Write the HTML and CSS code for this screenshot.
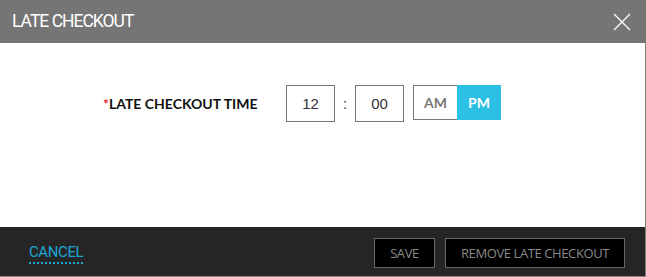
FILE: index.html
```html
<!DOCTYPE html>
<html>
<head>
<meta charset="utf-8">
<link rel="stylesheet" href="styles.css">
</head>
<body>
<div class="modal">
  <div class="header">
    <div class="title">LATE CHECKOUT</div>
    <svg class="close" width="20" height="20" viewBox="0 0 20 20"><path d="M2 2 L18 18 M18 2 L2 18" stroke="#fff" stroke-width="1.3" fill="none"/></svg>
  </div>
  <div class="body">
    <div class="row">
      <div class="label"><span class="req">*</span>LATE CHECKOUT TIME</div>
      <div class="time">
        <div class="box">12</div>
        <div class="colon">:</div>
        <div class="box">00</div>
        <div class="ampm">
          <div class="am">AM</div>
          <div class="pm">PM</div>
        </div>
      </div>
    </div>
  </div>
  <div class="footer">
    <a class="cancel">CANCEL</a>
    <div class="actions">
      <button class="btn save">SAVE</button>
      <button class="btn remove">REMOVE LATE CHECKOUT</button>
    </div>
  </div>
</div>
</body>
</html>
```
FILE: styles.css
```css
html, body {
  margin: 0;
  padding: 0;
  background: #fff;
}
.modal {
  width: 646px;
  height: 277px;
  display: flex;
  flex-direction: column;
}
.header {
  height: 43px;
  background: #757575;
  display: flex;
  align-items: center;
  justify-content: space-between;
  padding: 0 14px 0 12px;
  flex-shrink: 0;
}
.title {
  font-family: Roboto, sans-serif;
  font-size: 17.5px;
  letter-spacing: -1px;
  color: #fff;
  margin-top: -1px;
}
.close {
  display: block;
  margin-top: 1px;
}
.body {
  flex: 1;
  border-right: 1px solid #7d7d7d;
  background: #fff;
}
.row {
  display: flex;
  align-items: center;
  padding: 42px 0 0 103px;
}
.label {
  font-family: Lato, sans-serif;
  font-weight: bold;
  font-size: 14px;
  color: #111;
  width: 183px;
}
.req {
  color: #e3262b;
}
.time {
  display: flex;
  align-items: flex-start;
}
.box {
  width: 47px;
  height: 35px;
  border: 1px solid #777;
  font-family: Arial, "Liberation Sans", sans-serif;
  font-size: 15px;
  color: #333;
  display: flex;
  align-items: center;
  justify-content: center;
}
.colon {
  width: 20px;
  height: 37px;
  display: flex;
  align-items: center;
  justify-content: center;
  font-family: Arial, "Liberation Sans", sans-serif;
  font-size: 15px;
  color: #333;
}
.ampm {
  display: flex;
  margin-left: 9px;
  height: 35px;
}
.am, .pm {
  width: 44px;
  display: flex;
  align-items: center;
  justify-content: center;
  font-family: Lato, sans-serif;
  font-weight: bold;
  font-size: 14px;
}
.am {
  box-sizing: border-box;
  border: 1px solid #777;
  border-right: none;
  color: #777;
}
.pm {
  background: #2bc0e4;
  color: #fff;
}
.footer {
  height: 49px;
  background: #252525;
  border-bottom: 1px solid #8a8a8a;
  border-right: 1px solid #7d7d7d;
  display: flex;
  align-items: center;
  justify-content: space-between;
  padding: 0 20px 0 29px;
  flex-shrink: 0;
}
.cancel {
  font-family: Roboto, sans-serif;
  font-size: 15px;
  letter-spacing: -0.4px;
  color: #1ca6d4;
  border-bottom: 2px dotted #1ca6d4;
  padding-bottom: 1px;
  line-height: 18px;
  margin-top: 3px;
}
.actions {
  display: flex;
  gap: 10px;
  margin-top: 3px;
}
.btn {
  height: 30px;
  background: #000;
  border: 1px solid #666;
  color: #8a8a8a;
  font-family: "Open Sans", sans-serif;
  font-size: 13px;
  letter-spacing: -0.4px;
  padding: 0;
}
.save {
  width: 61px;
}
.remove {
  width: 180px;
}
```
